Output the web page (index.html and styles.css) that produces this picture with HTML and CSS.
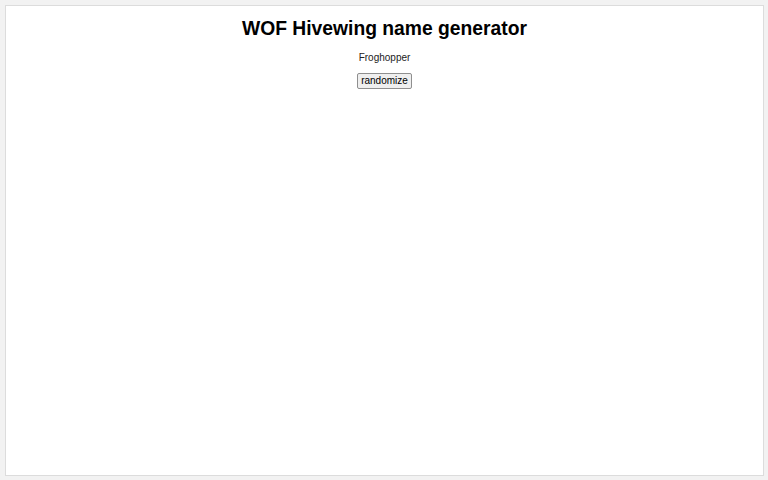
FILE: index.html
```html
<!DOCTYPE html>
<html lang="en">
<head>
    <meta charset="UTF-8">
    <meta name="viewport" content="width=device-width, initial-scale=1.0">
    <title>WOF Hivewing name generator</title>
    <link rel="stylesheet" href="styles.css">
</head>
<body>
    <div class="page">
        <h1>WOF Hivewing name generator</h1>
        <p id="name" class="name">Froghopper</p>
        <button class="randomize" onclick="randomize()">randomize</button>
    </div>

    <script>
        // name parts, bugs mostly
        const prefixes = ['Frog', 'Grass', 'Leaf', 'Tree', 'Wasp', 'Silver', 'Cricket', 'Hornet', 'Bumble', 'Dragon'];
        const suffixes = ['hopper', 'fly', 'wing', 'sting', 'bee', 'moth', 'tail', 'mantis'];

        function pick(list) {
            return list[Math.floor(Math.random() * list.length)];
        }

        function randomize() {
            document.getElementById('name').textContent = pick(prefixes) + pick(suffixes);
        }
    </script>
</body>
</html>
```

FILE: styles.css
```css
* {
    box-sizing: border-box;
}

body {
    margin: 0;
    padding: 5px 4px 4px 5px;
    height: 100vh;
    background-color: #f2f2f2;
    font-family: "Liberation Sans", Arial, sans-serif;
    color: #000;
}

.page {
    height: 100%;
    background-color: #fff;
    border: 1px solid #dcdcdc;
    text-align: center;
    padding-top: 1px;
}

h1 {
    font-size: 19.3px;
    margin: 11px 0 0;
}

.name {
    font-size: 10px;
    margin: 12px 0 7px;
    color: #222;
}

.randomize {
    font-family: "Liberation Sans", Arial, sans-serif;
    font-size: 10px;
    padding: 1px 3px 2px;
    background-color: #efefef;
    border: 1px solid #8f8f8f;
    border-radius: 2px;
    color: #000;
}
```
